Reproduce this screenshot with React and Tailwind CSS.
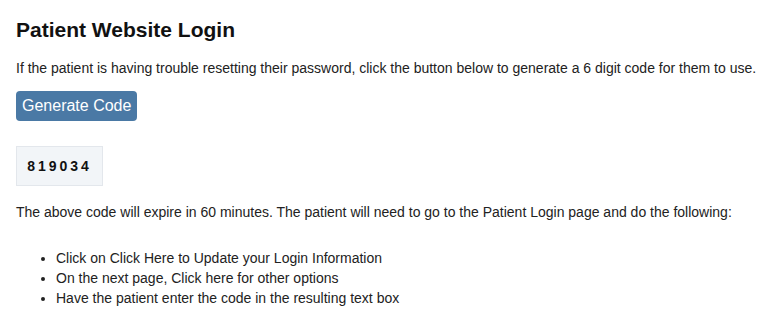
export default function App() {
  return (
    <div className="px-4 pt-[18px] text-[14px] text-[#222] font-['Liberation_Sans',Arial,sans-serif] bg-white min-h-[332px]">
      <h1 className="text-[21px] font-bold leading-[24px] text-[#111]">Patient Website Login</h1>
      <p className="mt-[17px] leading-[18px] whitespace-nowrap">
        If the patient is having trouble resetting their password, click the button below to generate a 6 digit code for them to use.
      </p>
      <button className="mt-[14px] h-[30px] px-[6px] rounded-[4px] bg-[#4a79a5] text-white text-[16px] leading-[30px]">
        Generate Code
      </button>
      <div className="mt-[25px] w-[87px] h-[40px] bg-[#f2f5f8] border border-[#e3e7ec] flex items-center justify-center text-[14px] font-bold tracking-[3px] text-[#111]">
        819034
      </div>
      <p className="mt-[17px] leading-[18px]">
        The above code will expire in 60 minutes. The patient will need to go to the Patient Login page and do the following:
      </p>
      <ul className="mt-[27px] list-disc pl-[40px] leading-[20px]">
        <li>Click on Click Here to Update your Login Information</li>
        <li>On the next page, Click here for other options</li>
        <li>Have the patient enter the code in the resulting text box</li>
      </ul>
    </div>
  )
}
